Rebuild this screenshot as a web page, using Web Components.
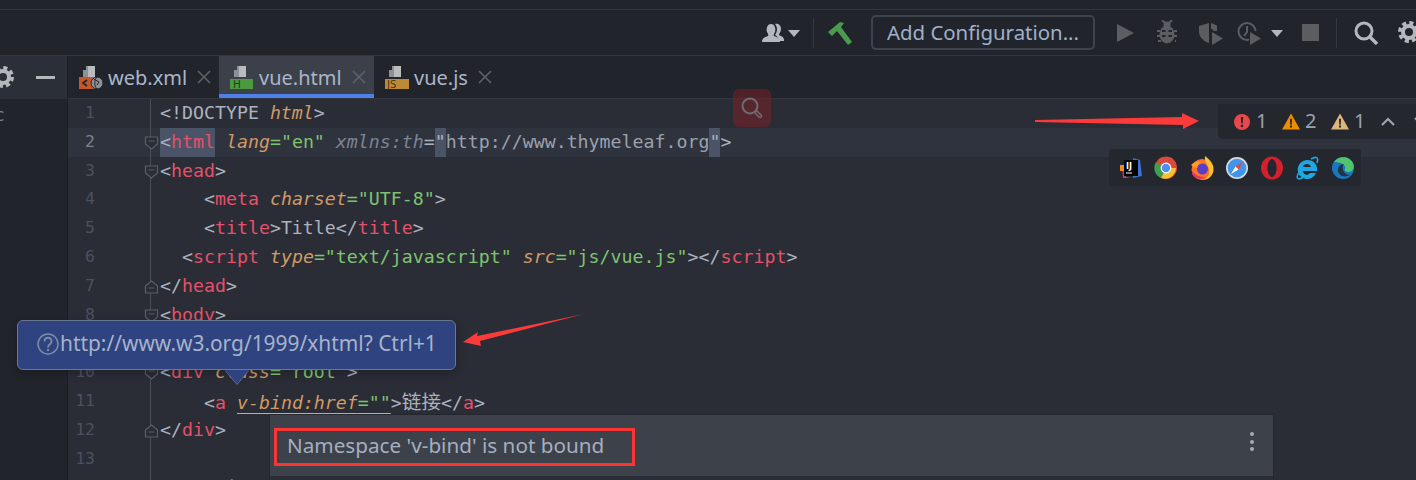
<!DOCTYPE html>
<html lang="en">
<head>
<meta charset="UTF-8">
<title>vue.html</title>
<style>
    html, body { margin: 0; height: 100%; background: #21252b; }
    body {
        position: relative;
        width: 1416px;
        height: 480px;
        overflow: hidden;
        display: flex;
        flex-direction: column;
        font-family: "Noto Sans", sans-serif;
    }
    .workspace { display: flex; flex: 1; min-height: 0; }
</style>
</head>
<body>
<ide-toolbar></ide-toolbar>
<div class="workspace">
    <ide-sidebar></ide-sidebar>
    <editor-pane>
        <editor-tabs></editor-tabs>
        <code-editor>
<code-line num="1"><span class="p">&lt;!DOCTYPE </span><span class="a">html</span><span class="p">&gt;</span></code-line>
<code-line num="2" fold="down" current><span class="sel">&lt;</span><span class="t sel">html</span> <span class="a">lang</span><span class="p g">=</span><span class="s">"en"</span> <span class="n">xmlns:th</span><span class="p">=</span><span class="sel">"</span><span class="l">http://www.thymeleaf.org</span><span class="sel">"</span><span class="p">&gt;</span></code-line>
<code-line num="3" fold="down"><span class="p">&lt;</span><span class="t">head</span><span class="p">&gt;</span></code-line>
<code-line num="4">    <span class="p">&lt;</span><span class="t">meta</span> <span class="a">charset</span><span class="s">="UTF-8"</span><span class="p">&gt;</span></code-line>
<code-line num="5">    <span class="p">&lt;</span><span class="t">title</span><span class="p">&gt;Title&lt;/</span><span class="t">title</span><span class="p">&gt;</span></code-line>
<code-line num="6">  <span class="p">&lt;</span><span class="t">script</span> <span class="a">type</span><span class="s">="text/javascript"</span> <span class="a">src</span><span class="s">="js/vue.js"</span><span class="p">&gt;&lt;/</span><span class="t">script</span><span class="p">&gt;</span></code-line>
<code-line num="7" fold="up"><span class="p">&lt;/</span><span class="t">head</span><span class="p">&gt;</span></code-line>
<code-line num="8" fold="down"><span class="p">&lt;</span><span class="t">body</span><span class="p">&gt;</span></code-line>
<code-line num="9"></code-line>
<code-line num="10" fold="down"><span class="p">&lt;</span><span class="t">div</span> <span class="a">class</span><span class="s">="root"</span><span class="p">&gt;</span></code-line>
<code-line num="11">    <span class="p">&lt;</span><span class="t">a</span> <span class="a ul">v-bind:href</span><span class="s ul">=""</span><span class="p">&gt;</span><span class="cjk">链接</span><span class="p">&lt;/</span><span class="t">a</span><span class="p">&gt;</span></code-line>
<code-line num="12" fold="up"><span class="p">&lt;/</span><span class="t">div</span><span class="p">&gt;</span></code-line>
<code-line num="13"></code-line>
<code-line num="14"><span class="p">  &lt;</span><span class="t">script</span><span class="p">&gt;</span></code-line>
        </code-editor>
    </editor-pane>
</div>

<search-badge></search-badge>
<red-arrow points="1035,120 1182,117 1182,113 1199,121 1183,129 1183,125 1035,122"></red-arrow>
<red-arrow points="463,342 478,332 477,336 584,314 480,341 481,346"></red-arrow>
<inspection-widget></inspection-widget>
<browser-popup></browser-popup>
<hint-tooltip>http://www.w3.org/1999/xhtml? Ctrl+1</hint-tooltip>
<problem-popup>Namespace 'v-bind' is not bound</problem-popup>

<script>
const DIM = '#5b5d61';
const LIGHT = '#b4b7bb';
const BAR = '#21252b';

const toolIcons = {
    user: [25, `<path fill="${LIGHT}" d="M2 21c0-4 3-5 6-6 1-1 0-2-1-4-1-3 0-8 4-8s5 5 4 8c-1 2-2 3-1 4 3 1 6 2 6 6z"/><path fill="${LIGHT}" d="M15 3c3-1 6 1 6 5 0 3-2 4-2 6 1 1 5 1 5 5v1h-5c0-3-2-5-4-6 1-2 2-3 2-6 0-2-1-4-2-5z"/>`],
    caret: [12, `<path fill="${LIGHT}" d="M0 9h12l-6 7z"/>`],
    sep: [1, `<path stroke="#33373e" d="M.5 0v30"/>`],
    hammer: [24, `<path fill="#4b9a4f" d="M0 11 12 1l4 1-3 4 11 15-4 3L9 10l-5 5z"/>`],
    play: [17, `<path fill="${DIM}" d="M0 3 17 12 0 21z"/>`],
    bug: [20, `<g fill="${DIM}"><ellipse cx="10" cy="14.500" rx="7.500" ry="9"/><circle cx="10" cy="5" r="3.600"/></g><path stroke="${DIM}" stroke-width="2" fill="none" d="M5 0l3 3M15 0l-3 3"/><path stroke="${BAR}" stroke-width="2" d="M5 11h3.500M11.500 11h3.500M5 16h3.500M11.500 16h3.500"/><path stroke="${DIM}" stroke-width="2" d="M0 11h20M0 16h20M1 21h18" stroke-dasharray="3 14 3"/>`],
    coverage: [24, `<path fill="${DIM}" d="M0 7 10 4v20C4 22 0 18 0 12z"/><path fill="${DIM}" d="M12 4l6 2.500V12h-3l-3-2.500z"/><path fill="${DIM}" d="M13 13l11 6.500L13 26z"/>`],
    profile: [27, `<circle cx="10" cy="12.500" r="8.500" fill="none" stroke="${DIM}" stroke-width="2"/><path stroke="${DIM}" stroke-width="2" fill="none" d="M10 7v6l-3 4"/><path fill="${BAR}" d="M12 12h14v15H12z"/><path fill="${DIM}" d="M13 13l11 6.500L13 26z"/>`],
    stop: [17, `<path fill="${DIM}" d="M0 0h17v17H0z"/>`],
    search: [24, `<circle cx="10" cy="10" r="8" fill="none" stroke="${LIGHT}" stroke-width="3"/><path stroke="${LIGHT}" stroke-width="3.400" d="M16 16l7 7"/>`],
    gear: [22, `<circle cx="11" cy="11" r="6" fill="none" stroke="${LIGHT}" stroke-width="4"/><circle cx="11" cy="11" r="9" fill="none" stroke="${LIGHT}" stroke-width="4" stroke-dasharray="4 3.070"/>`]
};

class ToolIcon extends HTMLElement {
    connectedCallback() {
        const [width, body] = toolIcons[this.getAttribute('name')];
        const height = { sep: 30, bug: 25, coverage: 27, profile: 28, stop: 17 }[this.getAttribute('name')] || 24;
        this.attachShadow({ mode: 'open' });
        this.shadowRoot.innerHTML = `
            <style>
                :host { display: block; flex: none; line-height: 0; }
            </style>
            <svg width="${width}" height="${height}" viewBox="0 0 ${width} ${height}">${body}</svg>
        `;
    }
}
customElements.define('tool-icon', ToolIcon);

class IdeToolbar extends HTMLElement {
    constructor() {
        super();
        this.attachShadow({ mode: 'open' });
        this.shadowRoot.innerHTML = `
            <style>
                :host {
                    display: block;
                    flex: none;
                    background: #21252b;
                    padding-top: 9px;
                    color: #9fb0ca;
                }
                .bar {
                    height: 47px;
                    box-sizing: border-box;
                    border-top: 1px solid #32363d;
                    border-bottom: 1px solid #32363d;
                    display: flex;
                    align-items: center;
                    padding-left: 760px;
                }
                button {
                    flex: none;
                    width: 224px;
                    height: 35px;
                    margin: 0 0 0 19px;
                    padding: 0 0 2px;
                    background: transparent;
                    border: 2px solid #3e434c;
                    border-radius: 5px;
                    color: inherit;
                    font: 20.400px "Noto Sans", sans-serif;
                    line-height: 28px;
                }
            </style>
            <div class="bar">
                <tool-icon name="user"></tool-icon>
                <tool-icon name="caret" style="margin-left:3px"></tool-icon>
                <tool-icon name="sep" style="margin-left:13px"></tool-icon>
                <tool-icon name="hammer" style="margin-left:14px"></tool-icon>
                <button>Add Configuration...</button>
                <tool-icon name="play" style="margin-left:22px"></tool-icon>
                <tool-icon name="bug" style="margin-left:23px"></tool-icon>
                <tool-icon name="coverage" style="margin-left:22px"></tool-icon>
                <tool-icon name="profile" style="margin-left:14px"></tool-icon>
                <tool-icon name="caret" style="margin-left:7px"></tool-icon>
                <tool-icon name="stop" style="margin-left:19px"></tool-icon>
                <tool-icon name="sep" style="margin-left:17px"></tool-icon>
                <tool-icon name="search" style="margin-left:17px"></tool-icon>
                <tool-icon name="gear" style="margin-left:20px"></tool-icon>
            </div>
        `;
    }
}
customElements.define('ide-toolbar', IdeToolbar);

class IdeSidebar extends HTMLElement {
    constructor() {
        super();
        this.attachShadow({ mode: 'open' });
        this.shadowRoot.innerHTML = `
            <style>
                :host {
                    display: block;
                    flex: none;
                    width: 67px;
                    background: #21252b;
                    border-right: 1px solid #1b1e23;
                    overflow: hidden;
                }
                .head {
                    height: 43px;
                    background: #2b2f37;
                    display: flex;
                    align-items: center;
                    margin-left: -8px;
                }
                .minus { width: 19px; height: 3px; background: #b4b7bb; margin-left: 22px; }
                .c {
                    font: 18px "DejaVu Sans Mono", monospace;
                    color: #7d828a;
                    margin: 5px 0 0 -6px;
                }
            </style>
            <div class="head">
                <tool-icon name="gear"></tool-icon>
                <span class="minus"></span>
            </div>
            <div class="c">c</div>
        `;
    }
}
customElements.define('ide-sidebar', IdeSidebar);

class EditorPane extends HTMLElement {
    constructor() {
        super();
        this.attachShadow({ mode: 'open' });
        this.shadowRoot.innerHTML = `
            <style>
                :host { display: flex; flex-direction: column; flex: 1; min-width: 0; background: #2a2d35; }
            </style>
            <slot></slot>
        `;
    }
}
customElements.define('editor-pane', EditorPane);

const filePage = (cut) => `<path fill="#8d9096" d="M4 1h8v11H4z"/><path fill="#b9bbbf" d="M9 1h7v11H9z"/><path fill="${cut}" d="M4 1h3v4H4z"/>`;
const fileIcons = {
    xml: `${filePage('#21252b')}<path fill="#c6572a" d="M0 12h19v12H0z"/><path fill="none" stroke="#21252b" stroke-width="1.600" d="M8 15l-4 3 4 3"/>
          <circle cx="18" cy="18" r="6" fill="#8d9096" stroke="#21252b" stroke-width="1"/><path stroke="#21252b" fill="none" d="M18 12c-3 3-3 9 0 12M15 14l5 3-2 3"/>`,
    html: `${filePage('#3c4049')}<path fill="#4b9a3d" d="M0 14h23v10H0z"/><text x="3" y="23" font-family="DejaVu Sans" font-size="10.500" fill="#21401c">H</text>`,
    js: `${filePage('#21252b')}<path fill="#bd8a35" d="M0 14h24v10H0z"/><text x="2" y="23" font-family="DejaVu Sans" font-size="10" fill="#4d3811">JS</text>`
};

class EditorTab extends HTMLElement {
    connectedCallback() {
        this.attachShadow({ mode: 'open' });
        this.shadowRoot.innerHTML = `
            <style>
                :host {
                    display: flex;
                    flex: none;
                    align-items: center;
                    box-sizing: border-box;
                    height: 42px;
                    padding: 0 9px 0 11px;
                    color: #a9b6cb;
                    font: 20px "Noto Sans", sans-serif;
                }
                :host([active]) {
                    background: #3c4049;
                    box-shadow: inset 0 -4px 0 #4f7fe8;
                }
                svg { flex: none; margin-right: 5px; }
                .close { margin: 0 0 0 10px; }
            </style>
            <svg width="24" height="24" viewBox="0 0 24 24">${fileIcons[this.getAttribute('kind')]}</svg>
            <slot></slot>
            <svg class="close" width="14" height="14" viewBox="0 0 14 14"><path stroke="#5d6168" stroke-width="1.600" d="M1 1l12 12M13 1 1 13"/></svg>
        `;
    }
}
customElements.define('editor-tab', EditorTab);

class EditorTabs extends HTMLElement {
    constructor() {
        super();
        this.attachShadow({ mode: 'open' });
        this.shadowRoot.innerHTML = `
            <style>
                :host {
                    display: flex;
                    flex: none;
                    height: 43px;
                    box-sizing: border-box;
                    background: #21252b;
                    border-bottom: 1px solid #32363d;
                }
                .w1 { width: 151px; }
                .w2 { width: 155px; }
                .w3 { width: 123px; }
            </style>
            <editor-tab class="w1" kind="xml">web.xml</editor-tab>
            <editor-tab class="w2" kind="html" active>vue.html</editor-tab>
            <editor-tab class="w3" kind="js">vue.js</editor-tab>
        `;
    }
}
customElements.define('editor-tabs', EditorTabs);

class CodeEditor extends HTMLElement {
    constructor() {
        super();
        this.attachShadow({ mode: 'open' });
        this.shadowRoot.innerHTML = `
            <style>
                :host { display: block; flex: 1; min-height: 0; overflow: hidden; }
            </style>
            <slot></slot>
        `;
    }
}
customElements.define('code-editor', CodeEditor);

const foldMarks = {
    down: '<path fill="#2a2d35" stroke="#5a5f68" stroke-width="1.200" d="M1 1h12v7l-6 5-6-5z"/><path stroke="#5a5f68" d="M4 5h6"/>',
    up: '<path fill="#2a2d35" stroke="#5a5f68" stroke-width="1.200" d="M1 13h12V6L7 1 1 6z"/><path stroke="#5a5f68" d="M4 8h6"/>'
};

class CodeLine extends HTMLElement {
    connectedCallback() {
        const fold = this.getAttribute('fold');
        this.attachShadow({ mode: 'open' });
        this.shadowRoot.innerHTML = `
            <style>
                :host {
                    display: flex;
                    height: 28.800px;
                    font: 18.250px/28.800px "DejaVu Sans Mono", "Noto Sans CJK SC", monospace;
                    color: #abb2bf;
                    white-space: pre;
                }
                :host([current]) { background: #2f333d; }
                :host([current]) .num { color: #7c838f; }
                .num {
                    width: 27px;
                    flex: none;
                    text-align: right;
                    font-size: 16.500px;
                    color: #4b5160;
                }
                .fold {
                    width: 65px;
                    flex: none;
                    box-sizing: border-box;
                    padding: 8px 0 0 49px;
                    line-height: 0;
                    background: linear-gradient(#4a4f58, #4a4f58) 55px 0 / 1px 100% no-repeat;
                }
                ::slotted(.p) { color: #abb2bf; }
                ::slotted(.g) { color: #7ec46f; }
                ::slotted(.t) { color: #e5506a; }
                ::slotted(.a) { color: #d19a66; font-style: italic; }
                ::slotted(.s) { color: #7ec46f; }
                ::slotted(.n) { color: #7d8491; font-style: italic; }
                ::slotted(.l) { color: #9aa1ad; }
                ::slotted(.sel) { background: #4b5466; display: inline-block; }
                ::slotted(.ul) { text-decoration: underline; text-decoration-color: #abb2bf; text-underline-offset: 4px; }
                ::slotted(.cjk) { font-size: 19.600px; color: #abb2bf; font-family: "Noto Sans CJK SC", sans-serif; }
            </style>
            <span class="num">${this.getAttribute('num')}</span>
            <span class="fold">${fold ? `<svg width="15" height="14" viewBox="0 0 14 14">${foldMarks[fold]}</svg>` : ''}</span>
            <span class="code"><slot></slot></span>
        `;
    }
}
customElements.define('code-line', CodeLine);

class SearchBadge extends HTMLElement {
    constructor() {
        super();
        this.attachShadow({ mode: 'open' });
        this.shadowRoot.innerHTML = `
            <style>
                :host {
                    position: absolute;
                    left: 733px;
                    top: 89px;
                    width: 38px;
                    height: 38px;
                    border-radius: 6px;
                    background: rgba(130, 30, 40, .5);
                    display: flex;
                    align-items: center;
                    justify-content: center;
                }
            </style>
            <svg width="24" height="24" viewBox="0 0 24 24">
                <circle cx="10" cy="10" r="7.500" fill="none" stroke="#6a6d72" stroke-width="2"/>
                <path stroke="#6a6d72" stroke-width="4.500" stroke-linecap="round" d="M16.500 16.500l3.500 3.500"/>
                <path stroke="#5e2a32" stroke-width="1.600" stroke-linecap="round" d="M16.500 16.500l3.500 3.500"/>
            </svg>
        `;
    }
}
customElements.define('search-badge', SearchBadge);

class RedArrow extends HTMLElement {
    connectedCallback() {
        this.attachShadow({ mode: 'open' });
        this.shadowRoot.innerHTML = `
            <style>
                :host { position: absolute; left: 0; top: 0; line-height: 0; pointer-events: none; }
            </style>
            <svg width="1416" height="480"><polygon fill="#fb3a3a" points="${this.getAttribute('points')}"/></svg>
        `;
    }
}
customElements.define('red-arrow', RedArrow);

class InspectionWidget extends HTMLElement {
    constructor() {
        super();
        this.attachShadow({ mode: 'open' });
        const triangle = (color) => `<svg width="18" height="17" viewBox="0 0 20 18"><path fill="${color}" d="M10 0 20 18H0z"/><path fill="#24272e" d="M8.900 6h2.200l-.3 6.500H9.200zM8.900 13.500h2.200v2.300H8.900z"/></svg>`;
        this.shadowRoot.innerHTML = `
            <style>
                :host {
                    position: absolute;
                    left: 1218px;
                    top: 104px;
                    width: 198px;
                    height: 35px;
                    background: #24272e;
                    border-bottom-left-radius: 5px;
                    display: flex;
                    align-items: center;
                    padding-left: 16px;
                    box-sizing: border-box;
                    font: 20px "Noto Sans", sans-serif;
                    color: #9aa3b0;
                }
                span { margin: -3px 15px 0 5px; width: 11px; }
                svg { flex: none; }
            </style>
            <svg width="16" height="16" viewBox="0 0 18 18" style="margin-right:1px"><circle cx="9" cy="9" r="9" fill="#e8484c"/><path fill="#24272e" d="M7.700 3.500h2.600l-.4 7H8.100zM7.700 12h2.600v2.600H7.700z"/></svg>
            <span>1</span>
            ${triangle('#f08c00')}
            <span>2</span>
            ${triangle('#dcb67a')}
            <span>1</span>
            <svg width="14" height="9" viewBox="0 0 14 9" style="margin-left:1px"><path fill="none" stroke="#a4a7ac" stroke-width="2" d="M1 8l6-6 6 6"/></svg>
            <svg width="14" height="9" viewBox="0 0 14 9" style="margin-left:19px"><path fill="none" stroke="#a4a7ac" stroke-width="2" d="M1 1l6 6 6-6"/></svg>
        `;
    }
}
customElements.define('inspection-widget', InspectionWidget);

const browserIcons = {
    idea: `<path fill="#3f6fd0" d="M14 2l7 2 2 16-9 2z"/><path fill="#c9317f" d="M3 10l4-3v14l5 1-8 0z"/><path fill="#f28a24" d="M1 9h5v6H1z"/><path fill="#000" d="M5 4h14v16H5z"/>
           <text x="7" y="13" font-family="DejaVu Sans" font-size="8" font-weight="bold" fill="#fff">IJ</text><path stroke="#fff" d="M7 17h6"/>`,
    chrome: `<circle cx="12" cy="12" r="11" fill="#d9493c"/><path fill="#f3c332" d="M12 12l10 0A11 11 0 0 1 7 22z"/><path fill="#3f9f4f" d="M12 12 7 22A11 11 0 0 1 2 6z"/><path fill="#d9493c" d="M2 7A11 11 0 0 1 22 7H12z"/><circle cx="12" cy="12" r="5.400" fill="#fff"/><circle cx="12" cy="12" r="4.200" fill="#4f8ef0"/>`,
    firefox: `<circle cx="12" cy="13.500" r="10.500" fill="#ff6f2d"/><path fill="#ffc02c" d="M15 0c5 4 9 8 8.500 14-.5 6-5 10-11.500 10 6-2 8-6 7-11-1-4-5-7-4-13z"/><path fill="#e5356b" d="M2 18c4 5 10 6 15 3-5 1-11-1-15-6z"/><circle cx="12.500" cy="13" r="5.500" fill="#5b3ec4"/><path fill="#ff9a2d" d="M1 9c3-3 7-5 11-3-3 1-4 3-5 6-2 0-4-1-6-3z"/>`,
    safari: `<circle cx="12" cy="12" r="11" fill="#d6dbe2"/><circle cx="12" cy="12" r="9.300" fill="#3f95ea"/><path fill="#e8453c" d="M18 6l-7.500 4.500 3 3z"/><path fill="#fff" d="M6 18l4.500-7.500 3 3z"/>`,
    opera: `<ellipse cx="12" cy="12" rx="11" ry="11.500" fill="#d3202c"/><ellipse cx="12" cy="12" rx="4.600" ry="9" fill="#24272e"/>`,
    ie: `<path fill="#1ea8e3" d="M12 4a9.500 9.500 0 1 0 9 13h-6c-2 3-7 2-7-2h14c1-7-4-11-10-11zM8 11c.5-4 7-4 8 0z" fill-rule="evenodd"/><path fill="none" stroke="#1ea8e3" stroke-width="1.600" d="M5 15C0 22 2 25 9 21M16 3c5-3 8-2 6 4"/>`,
    edge: `<circle cx="12" cy="12" r="11" fill="#1878bd"/><path fill="#4fc56d" d="M3 6c4-6 15-7 19 1 2 4 0 9-4 9-3 0-5-1-4-3 1-4-3-7-11-7z"/><path fill="#24272e" d="M7 14c0-3 2-6 6-6-1 1-2 3-1 6 1 3 4 5 7 5-5 3-12 1-12-5z" opacity=".85"/>`
};

class BrowserPopup extends HTMLElement {
    constructor() {
        super();
        this.attachShadow({ mode: 'open' });
        this.shadowRoot.innerHTML = `
            <style>
                :host {
                    position: absolute;
                    left: 1109px;
                    top: 149px;
                    width: 252px;
                    height: 37px;
                    background: #24272e;
                    border-radius: 3px;
                    display: flex;
                    align-items: center;
                    gap: 11.300px;
                    padding-left: 10px;
                    box-sizing: border-box;
                }
                svg { flex: none; }
            </style>
            ${Object.values(browserIcons).map(icon => `<svg width="24" height="24" viewBox="0 0 24 24">${icon}</svg>`).join('')}
        `;
    }
}
customElements.define('browser-popup', BrowserPopup);

class HintTooltip extends HTMLElement {
    constructor() {
        super();
        this.attachShadow({ mode: 'open' });
        this.shadowRoot.innerHTML = `
            <style>
                :host {
                    position: absolute;
                    left: 17px;
                    top: 320px;
                    width: 439px;
                    height: 50px;
                    box-sizing: border-box;
                    background: #2e4380;
                    border: 1px solid #6c7791;
                    border-radius: 6px;
                    box-shadow: 0 3px 10px rgba(0, 0, 0, .25);
                    display: flex;
                    align-items: center;
                    padding: 0 0 5px 19px;
                    color: #a6b3ca;
                    font: 20.900px "Noto Sans", sans-serif;
                }
                svg { flex: none; margin: 3px 1px 0 0; }
                .tip { position: absolute; left: 207px; top: 47px; margin: 0; }
            </style>
            <svg width="22" height="22" viewBox="0 0 22 22">
                <circle cx="11" cy="11" r="10" fill="none" stroke="#7f8ba6" stroke-width="1.500"/>
                <path fill="none" stroke="#7f8ba6" stroke-width="1.800" d="M7.500 8.500c0-5 7-5 7 0 0 3-3.500 2.500-3.500 6"/>
                <circle cx="11" cy="17" r="1.200" fill="#7f8ba6"/>
            </svg>
            <slot></slot>
            <svg class="tip" width="24" height="17" viewBox="0 0 24 17"><path fill="#2e4380" d="M0 2h24L12 17z"/><path fill="none" stroke="#6c7791" d="M0 2.500 12 16.500 24 2.500" opacity=".7"/></svg>
        `;
    }
}
customElements.define('hint-tooltip', HintTooltip);

class ProblemPopup extends HTMLElement {
    constructor() {
        super();
        this.attachShadow({ mode: 'open' });
        this.shadowRoot.innerHTML = `
            <style>
                :host {
                    position: absolute;
                    left: 269px;
                    top: 414px;
                    width: 1005px;
                    height: 70px;
                    box-sizing: border-box;
                    background: #2b2e36;
                    border: 1px solid #24272d;
                    color: #a4afc2;
                    font: 20.700px "Noto Sans", sans-serif;
                }
                .head {
                    height: 61px;
                    box-sizing: border-box;
                    background: #3d4149;
                    padding: 13px 0 0 4px;
                    position: relative;
                }
                .box {
                    display: flex;
                    align-items: center;
                    width: 361px;
                    height: 38px;
                    box-sizing: border-box;
                    padding: 0 0 5px 10px;
                    border: 3px solid #fb3434;
                }
                .dots {
                    position: absolute;
                    right: 19px;
                    top: 17px;
                    display: flex;
                    flex-direction: column;
                    gap: 3.500px;
                }
                .dots i { width: 4px; height: 4px; border-radius: 50%; background: #a8abb0; }
            </style>
            <div class="head">
                <div class="box"><slot></slot></div>
                <div class="dots"><i></i><i></i><i></i></div>
            </div>
        `;
    }
}
customElements.define('problem-popup', ProblemPopup);
</script>
</body>
</html>
